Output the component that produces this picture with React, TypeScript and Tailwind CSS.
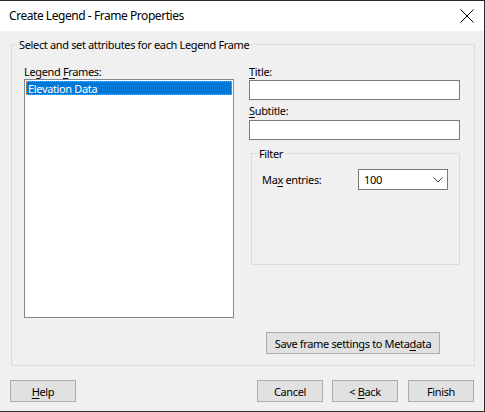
import React from "react";

const U = ({ c }: { c: string }) => <span className="underline underline-offset-[2px]">{c}</span>;

function Btn({ children, className = "" }: { children: React.ReactNode; className?: string }) {
  return (
    <div
      className={
        "h-[22px] border border-[#adadad] bg-[#e1e1e1] flex items-center justify-center text-[#000] " + className
      }
    >
      {children}
    </div>
  );
}

export default function App() {
  return (
    <div className="w-[485px] h-[412px] overflow-hidden bg-[#f0f0f0] border-t border-r border-b border-[#2b2b2b] flex flex-col font-['Noto_Sans',sans-serif] text-[11px] leading-[13px] tracking-[-0.35px] text-black">
      {/* title bar */}
      <div className="h-[30px] bg-white flex items-center justify-between pl-[9px] pr-[10px] shrink-0">
        <span className="text-[12px] leading-[16px] tracking-[-0.45px]">Create Legend - Frame Properties</span>
        <svg width="14" height="14" viewBox="0 0 14 14">
          <path d="M0.5 0.5 L13.5 13.5 M13.5 0.5 L0.5 13.5" stroke="#000" strokeWidth="1" fill="none" />
        </svg>
      </div>

      {/* main group */}
      <div className="relative mt-[13px] ml-[11px] w-[464px] h-[322px] border border-[#dcdcdc] shrink-0">
        <span className="absolute -top-[7px] left-[5px] bg-[#f0f0f0] px-[2px]">
          Select and set attributes for each Legend Frame
        </span>
        <div className="flex pt-[20px] pl-[12px] gap-[15px]">
          {/* left column */}
          <div className="flex flex-col w-[210px]">
            <div className="h-[14px]">
              Legend <U c="F" />rames:
            </div>
            <div className="h-[239px] border border-[#828790] bg-white p-[1px]">
              <div className="h-[14px] bg-[#0078d7] text-white outline outline-1 outline-dotted outline-[#ff8728] -outline-offset-1 pl-[2px] flex items-center">
                Elevation Data
              </div>
            </div>
          </div>
          {/* right column */}
          <div className="flex flex-col w-[211px]">
            <div className="h-[15px]">
              <U c="T" />itle:
            </div>
            <div className="h-[20px] border border-[#7a7a7a] bg-white" />
            <div className="h-[20px] flex items-end pb-[3px]">
              <span>
                <U c="S" />ubtitle:
              </span>
            </div>
            <div className="h-[20px] border border-[#7a7a7a] bg-white" />
            <div className="relative mt-[13px] ml-[2px] w-[209px] h-[112px] border border-[#dcdcdc]">
              <span className="absolute -top-[7px] left-[5px] bg-[#f0f0f0] px-[2px]">Filter</span>
              <div className="flex items-center pt-[15px] pl-[10px]">
                <span className="w-[96px]">
                  Ma<U c="x" /> entries:
                </span>
                <div className="w-[90px] h-[21px] border border-[#7a7a7a] bg-white flex items-center justify-between pl-[5px] pr-[4px]">
                  <span>100</span>
                  <svg width="10" height="6" viewBox="0 0 10 6">
                    <path d="M0.5 0.5 L5 5 L9.5 0.5" stroke="#444" strokeWidth="1" fill="none" />
                  </svg>
                </div>
              </div>
            </div>
            <Btn className="mt-[67px] ml-[17px] w-[174px]">
              <span>
                Save frame settings to Meta<U c="d" />ata
              </span>
            </Btn>
          </div>
        </div>
      </div>

      {/* bottom buttons */}
      <div className="flex mt-[14px] pl-[10px] shrink-0">
        <Btn className="w-[66px]">
          <span>
            <U c="H" />elp
          </span>
        </Btn>
        <Btn className="w-[66px] ml-[181px]">Cancel</Btn>
        <Btn className="w-[66px] ml-[9px]">
          <span>
            &lt; <U c="B" />ack
          </span>
        </Btn>
        <Btn className="w-[66px] ml-[10px]">Finish</Btn>
      </div>
    </div>
  );
}
